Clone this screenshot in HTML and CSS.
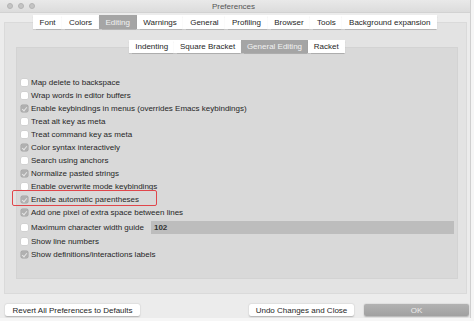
FILE: index.html
```html
<!DOCTYPE html>
<html lang="en">

<head>
    <meta charset="UTF-8">
    <title>Preferences</title>
    <link rel="stylesheet" href="styles.css">
</head>

<body>
    <div class="window">
        <div class="titlebar">
            <div class="lights"><span></span><span></span><span></span></div>
            <div class="title">Preferences</div>
        </div>

        <div class="content">
            <div class="tabs main-tabs">
                <span class="tab">Font</span>
                <span class="tab">Colors</span>
                <span class="tab selected">Editing</span>
                <span class="tab">Warnings</span>
                <span class="tab">General</span>
                <span class="tab">Profiling</span>
                <span class="tab">Browser</span>
                <span class="tab">Tools</span>
                <span class="tab">Background expansion</span>
            </div>

            <div class="panel">
                <div class="tabs sub-tabs">
                    <span class="tab">Indenting</span>
                    <span class="tab">Square Bracket</span>
                    <span class="tab selected">General Editing</span>
                    <span class="tab">Racket</span>
                </div>

                <div class="group">
                    <div class="row"><span class="box"></span>Map delete to backspace</div>
                    <div class="row"><span class="box"></span>Wrap words in editor buffers</div>
                    <div class="row"><span class="box checked"></span>Enable keybindings in menus (overrides Emacs keybindings)</div>
                    <div class="row"><span class="box"></span>Treat alt key as meta</div>
                    <div class="row"><span class="box"></span>Treat command key as meta</div>
                    <div class="row"><span class="box checked"></span>Color syntax interactively</div>
                    <div class="row"><span class="box"></span>Search using anchors</div>
                    <div class="row"><span class="box checked"></span>Normalize pasted strings</div>
                    <div class="row"><span class="box"></span>Enable overwrite mode keybindings</div>
                    <div class="row highlight"><span class="box checked"></span>Enable automatic parentheses</div>
                    <div class="row"><span class="box checked"></span>Add one pixel of extra space between lines</div>
                    <div class="row tall"><span class="box"></span>Maximum character width guide<span class="field">102</span></div>
                    <div class="row"><span class="box"></span>Show line numbers</div>
                    <div class="row"><span class="box checked"></span>Show definitions/interactions labels</div>
                </div>
            </div>

            <div class="buttons">
                <span class="button revert">Revert All Preferences to Defaults</span>
                <span class="spacer"></span>
                <span class="button">Undo Changes and Close</span>
                <span class="button ok">OK</span>
            </div>
        </div>
    </div>
</body>

</html>
```

FILE: styles.css
```css
body {
    margin: 0;
    padding: 0;
    background: #f6f6f6;
    font-family: 'Liberation Sans', Arial, sans-serif;
    font-size: 8px;
    color: #262626;
}

.window {
    width: 471px;
    height: 318px;
    background: #ececec;
    border-right: 1px solid #cfcfcf;
    box-sizing: border-box;
}

.titlebar {
    height: 13px;
    display: flex;
    align-items: center;
    background: linear-gradient(#e9e9e9, #dcdcdc);
    border-bottom: 1px solid #d2d2d2;
    box-sizing: border-box;
}

.lights {
    display: flex;
    gap: 5px;
    padding-left: 7px;
}

.lights span {
    width: 6px;
    height: 6px;
    border-radius: 50%;
    background: #c4c4c4;
    border: 0.5px solid #b4b4b4;
    box-sizing: border-box;
}

.title {
    flex: 1;
    text-align: center;
    color: #555;
    margin-right: 38px;
}

.content {
    padding-top: 2px;
}

.tabs {
    display: flex;
    justify-content: center;
    position: relative;
    z-index: 1;
}

.tab {
    background: #fff;
    display: flex;
    align-items: center;
    box-shadow: 0 0.5px 1px rgba(0, 0, 0, 0.2);
    white-space: nowrap;
}

.tab.selected {
    background: #a5a5a5;
    color: #f2f2f2;
}

.main-tabs .tab {
    height: 14px;
    padding: 0 6.7px;
}

.sub-tabs .tab {
    height: 13px;
    padding: 0 5.9px;
}

.panel {
    margin: -7px 3px 0 4px;
    background: #e3e3e3;
    border: 1px solid #dadada;
    padding: 17px 8px 14px 11px;
}

.group {
    margin-top: -6px;
    background: #d9d9d9;
    border: 1px solid #d3d3d3;
    padding: 28px 0 17px 0;
}

.row {
    height: 13px;
    display: flex;
    align-items: center;
    position: relative;
    white-space: nowrap;
}

.row.tall {
    height: 16px;
}

.box {
    width: 7px;
    height: 7px;
    margin: 0 3px 0 4px;
    background: #fff;
    border-radius: 1.5px;
    box-shadow: 0 0 0 0.5px #c9c9c9;
    position: relative;
}

.box.checked {
    background: #b0b0b0;
    box-shadow: 0 0 0 0.5px #a2a2a2;
}

.box.checked::after {
    content: "";
    position: absolute;
    left: 2px;
    top: 0.5px;
    width: 2px;
    height: 4px;
    border-right: 1px solid #e4e4e4;
    border-bottom: 1px solid #e4e4e4;
    transform: rotate(40deg);
}

.highlight::after {
    content: "";
    position: absolute;
    left: -5px;
    top: -3px;
    width: 145px;
    height: 16px;
    border: 1.2px solid #e0464b;
    border-radius: 2px;
    box-sizing: border-box;
}

.field {
    margin-left: 7px;
    flex: 1;
    margin-right: 3px;
    height: 13px;
    background: #bdbdbd;
    display: flex;
    align-items: center;
    padding-left: 3px;
    font-weight: bold;
    color: #333;
}

.buttons {
    display: flex;
    align-items: center;
    gap: 10px;
    margin-top: 10px;
    padding: 0 1px 0 5px;
}

.button {
    height: 12px;
    display: flex;
    align-items: center;
    justify-content: center;
    width: 105px;
    background: #fff;
    box-shadow: 0 0.5px 1.5px rgba(0, 0, 0, 0.25);
    border-radius: 2px;
}

.button.revert {
    width: 135px;
}

.button.ok {
    background: linear-gradient(#b2b2b2, #a0a0a0);
    color: #ededed;
}

.spacer {
    flex: 1;
}
```
